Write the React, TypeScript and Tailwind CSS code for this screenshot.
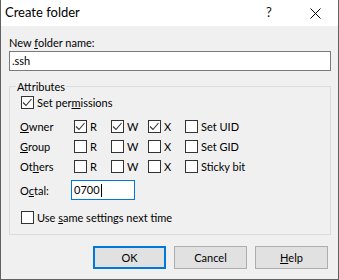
import React from "react";

const font = { fontFamily: "Lato, 'Liberation Sans', sans-serif" };

function Box({ checked = false }: { checked?: boolean }) {
  return (
    <span className="w-[13px] h-[13px] border border-[#333333] bg-white shrink-0 flex">
      {checked && (
        <svg width="11" height="11" viewBox="0 0 11 11">
          <path d="M1 5.5 L4 8.5 L9.5 2" stroke="#333333" strokeWidth="1.1" fill="none" />
        </svg>
      )}
    </span>
  );
}

function Check({ label, checked = false }: { label: React.ReactNode; checked?: boolean }) {
  return (
    <div className="flex items-center gap-[3px] h-[13px] leading-[15px]">
      <Box checked={checked} />
      <span>{label}</span>
    </div>
  );
}

const rows = [
  { name: <><u>O</u>wner</>, bits: [true, true, true], extra: "Set UID" },
  { name: <><u>G</u>roup</>, bits: [false, false, false], extra: "Set GID" },
  { name: <>Ot<u>h</u>ers</>, bits: [false, false, false], extra: "Sticky bit" },
];

export default function App() {
  return (
    <div
      className="w-[339px] h-[280px] bg-[#f0f0f0] border-x border-b border-[#616161] text-black text-[11px] flex flex-col"
      style={font}
    >
      {/* Title bar */}
      <div className="h-[26px] bg-white flex items-center shrink-0">
        <span className="pl-[4px] text-[13px]">Create folder</span>
        <div className="ml-auto flex h-full">
          <div className="w-[46px] h-full flex items-center justify-center text-[13px] text-[#111]">?</div>
          <div className="w-[46px] h-full flex items-center justify-center">
            <svg width="11" height="11" viewBox="0 0 11 11">
              <path d="M0.5 0.5 L10.5 10.5 M10.5 0.5 L0.5 10.5" stroke="#000" strokeWidth="1" />
            </svg>
          </div>
        </div>
      </div>

      <div className="px-[8px] flex flex-col">
        <div className="mt-[9px] leading-[15px]">
          New <u>f</u>older name:
        </div>
        <div className="mt-[1px] h-[20px] w-[322px] border border-[#7a7a7a] bg-white flex items-center pl-[2px]">
          .ssh
        </div>

        {/* Attributes group */}
        <fieldset className="mt-[8px] w-[322px] border border-[#dcdcdc] pl-[6px] pb-[10px]">
          <legend className="px-[1px] leading-[15px]">Attributes</legend>
          <div className="pl-[4px] flex flex-col">
            <div className="mt-[2px] pl-[1px]">
              <Check label={<>Set per<u>m</u>issions</>} checked />
            </div>

            <div className="mt-[11px] flex flex-col gap-[7px]">
              {rows.map((r, i) => (
                <div key={i} className="flex items-center h-[13px]">
                  <span className="w-[54px] leading-[15px]">{r.name}</span>
                  <div className="w-[37px]"><Check label="R" checked={r.bits[0]} /></div>
                  <div className="w-[37px]"><Check label="W" checked={r.bits[1]} /></div>
                  <div className="w-[37px]"><Check label="X" checked={r.bits[2]} /></div>
                  <Check label={r.extra} />
                </div>
              ))}
            </div>

            <div className="mt-[7px] flex items-center h-[20px]">
              <span className="w-[51px] leading-[15px]">O<u>c</u>tal:</span>
              <div className="w-[64px] h-[20px] border border-[#0078d7] bg-white flex items-center pl-[2px]">
                <span>0700</span>
                <span className="w-[1px] h-[13px] bg-black ml-[1px]" />
              </div>
            </div>

            <div className="mt-[11px] pl-[1px]">
              <Check label={<>Use <u>s</u>ame settings next time</>} />
            </div>
          </div>
        </fieldset>

        {/* Buttons */}
        <div className="mt-[11px] flex gap-[8px] pl-[84px]">
          <button className="w-[73px] h-[23px] bg-[#e1e1e1] border-2 border-[#0078d7] leading-none">OK</button>
          <button className="w-[73px] h-[23px] bg-[#e1e1e1] border border-[#adadad] leading-none">Cancel</button>
          <button className="w-[73px] h-[23px] bg-[#e1e1e1] border border-[#adadad] leading-none">
            <u>H</u>elp
          </button>
        </div>
      </div>
    </div>
  );
}
